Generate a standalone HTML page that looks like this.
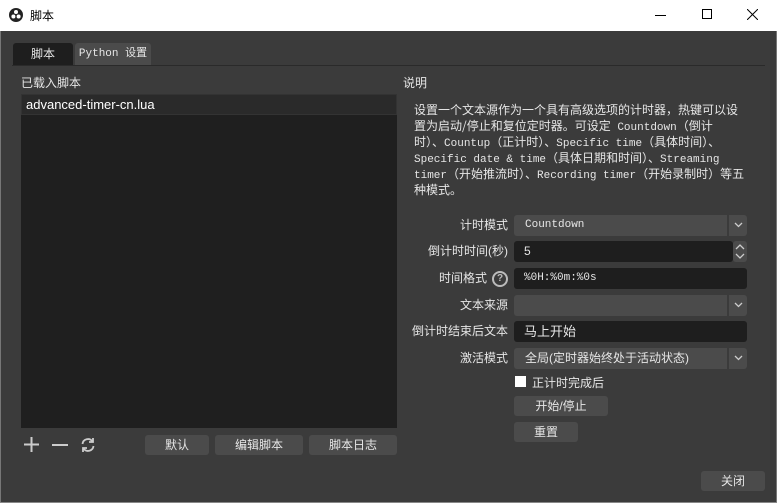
<!DOCTYPE html>
<html><head><meta charset="utf-8"><style>
*{margin:0;padding:0;box-sizing:border-box}
body{width:777px;height:503px;overflow:hidden;background:#3b3b3b;font-family:"Liberation Sans","Noto Sans CJK SC",sans-serif;font-size:12px;color:#e6e6e6;position:relative}
.a{position:absolute}
.title{left:0;top:0;width:777px;height:31px;background:#fff;color:#000}
.btn{background:#4b4b4b;border-radius:3px;text-align:center;color:#e6e6e6;line-height:20px;height:20px}
.inp{background:#1e1e1e;border-radius:3px;height:21px;line-height:21px;padding-left:10px}
.sel{background:#4b4b4b;border-radius:3px;height:21px;line-height:21px;padding-left:11px}
.lbl{text-align:right;width:110px;left:398px;line-height:21px}
.mono{font-family:"Liberation Mono","Noto Sans CJK SC",monospace;font-size:11px}
.dd{position:absolute;right:0;top:0;width:20px;height:21px;border-left:2px solid #3b3b3b}
.dd svg{position:absolute;left:5px;top:7px}
.desc{white-space:nowrap}
.desc .c{font-family:"Noto Sans CJK SC",sans-serif;font-size:12px}
</style></head><body>
<div class="a title">
<svg class="a" style="left:9px;top:8px" width="14" height="14" viewBox="0 0 14 14"><circle cx="7" cy="7" r="7" fill="#222"/><circle cx="7" cy="4" r="2" fill="#fff"/><circle cx="4.4" cy="8.5" r="2" fill="#fff"/><circle cx="9.6" cy="8.5" r="2" fill="#fff"/></svg>
<div class="a" style="left:30px;top:7px;font-size:12px">脚本</div>
<div class="a" style="left:655px;top:15px;width:11px;height:1px;background:#000"></div>
<div class="a" style="left:702px;top:9px;width:10px;height:10px;border:1px solid #000"></div>
<svg class="a" style="left:747px;top:9px" width="11" height="11" viewBox="0 0 11 11"><path d="M0 0L11 11M11 0L0 11" stroke="#000" stroke-width="1"/></svg>
</div>
<div class="a" style="left:0;top:31px;width:1px;height:472px;background:#777"></div>
<div class="a" style="right:0;top:31px;width:1px;height:472px;background:#777"></div>
<div class="a" style="left:0;bottom:0;width:777px;height:1px;background:#888"></div>
<div class="a" style="left:13px;top:43px;width:60px;height:22px;background:#1e1e1e;border-radius:3px 3px 0 0;text-align:center;line-height:22px">脚本</div>
<div class="a mono" style="left:75px;top:43px;width:76px;height:22px;background:#4b4b4b;border-radius:3px 3px 0 0;text-align:center;line-height:22px">Python 设置</div>
<div class="a" style="left:12px;top:65px;width:753px;height:1px;background:#2a2a2a"></div>
<div class="a" style="left:21px;top:74px">已载入脚本</div>
<div class="a" style="left:21px;top:94px;width:376px;height:334px;background:#1f1f1f"></div>
<div class="a" style="left:21px;top:94px;width:376px;height:21px;background:#2a2a2a;border:1px solid #333;padding-left:4px;line-height:19px;font-size:13px;color:#fff">advanced-timer-cn.lua</div>
<svg class="a" style="left:24px;top:437px" width="15" height="15" viewBox="0 0 15 15"><path d="M7.5 0V15M0 7.5H15" stroke="#ccc" stroke-width="2"/></svg>
<div class="a" style="left:52px;top:444px;width:16px;height:2px;background:#ccc"></div>
<svg class="a" style="left:80px;top:437px" width="16" height="16" viewBox="0 0 16 16" fill="none" stroke="#ccc" stroke-width="1.8"><path d="M2.5 7A5.5 5.5 0 0 1 12.5 4.5M13.5 9A5.5 5.5 0 0 1 3.5 11.5"/><path d="M13 1V5H9M3 15V11H7"/></svg>
<div class="a btn" style="left:145px;top:435px;width:64px">默认</div>
<div class="a btn" style="left:215px;top:435px;width:88px">编辑脚本</div>
<div class="a btn" style="left:309px;top:435px;width:88px">脚本日志</div>
<div class="a" style="left:403px;top:74px">说明</div>
<div class="a mono desc" style="left:414px;top:103px;line-height:14px;font-size:11px"><span class="c">设置一个文本源作为一个具有高级选项的计时器，热键可以设</span><br><span class="c">置为启动/停止和复位定时器。可设定</span> Countdown<span class="c">（倒计</span><br><span class="c">时）、</span>Countup<span class="c">（正计时）、</span>Specific time<span class="c">（具体时间）、</span><br>Specific date &amp; time<span class="c">（具体日期和时间）、</span>Streaming<br>timer<span class="c">（开始推流时）、</span>Recording timer<span class="c">（开始录制时）等五</span><br><span class="c">种模式。</span></div>
<div class="a lbl" style="top:215px">计时模式</div>
<div class="a sel mono" style="left:514px;top:215px;width:233px">Countdown<div class="dd"><svg width="9" height="6" viewBox="0 0 9 6"><path d="M1 1L4.5 4.5L8 1" stroke="#ccc" stroke-width="1.3" fill="none"/></svg></div></div>
<div class="a lbl" style="top:241px">倒计时时间(秒)</div>
<div class="a inp" style="left:514px;top:241px;width:219px;font-size:12px">5</div>
<div class="a" style="left:733px;top:241px;width:14px;height:21px;background:#4b4b4b;border-radius:3px"><svg width="14" height="21" viewBox="0 0 14 21"><path d="M3 8L7 4L11 8M3 13L7 17L11 13" stroke="#ccc" stroke-width="1.3" fill="none"/></svg></div>
<div class="a lbl" style="top:268px;width:89px">时间格式</div>
<div class="a" style="left:492px;top:271px;width:16px;height:16px;border:2px solid #bbb;border-radius:50%;font-size:10px;text-align:center;line-height:12px;font-weight:bold;color:#bbb">?</div>
<div class="a inp mono" style="left:514px;top:268px;width:233px">%0H:%0m:%0s</div>
<div class="a lbl" style="top:295px">文本来源</div>
<div class="a sel" style="left:514px;top:295px;width:233px"><div class="dd"><svg width="9" height="6" viewBox="0 0 9 6"><path d="M1 1L4.5 4.5L8 1" stroke="#ccc" stroke-width="1.3" fill="none"/></svg></div></div>
<div class="a lbl" style="top:321px">倒计时结束后文本</div>
<div class="a inp" style="left:514px;top:321px;width:233px;font-size:13px">马上开始</div>
<div class="a lbl" style="top:348px">激活模式</div>
<div class="a sel" style="left:514px;top:348px;width:233px">全局(定时器始终处于活动状态)<div class="dd"><svg width="9" height="6" viewBox="0 0 9 6"><path d="M1 1L4.5 4.5L8 1" stroke="#ccc" stroke-width="1.3" fill="none"/></svg></div></div>
<div class="a" style="left:515px;top:376px;width:11px;height:11px;background:#fff"></div>
<div class="a" style="left:532px;top:374px">正计时完成后</div>
<div class="a btn" style="left:514px;top:396px;width:94px">开始/停止</div>
<div class="a btn" style="left:514px;top:422px;width:64px">重置</div>
<div class="a btn" style="left:701px;top:471px;width:64px">关闭</div>
</body></html>
